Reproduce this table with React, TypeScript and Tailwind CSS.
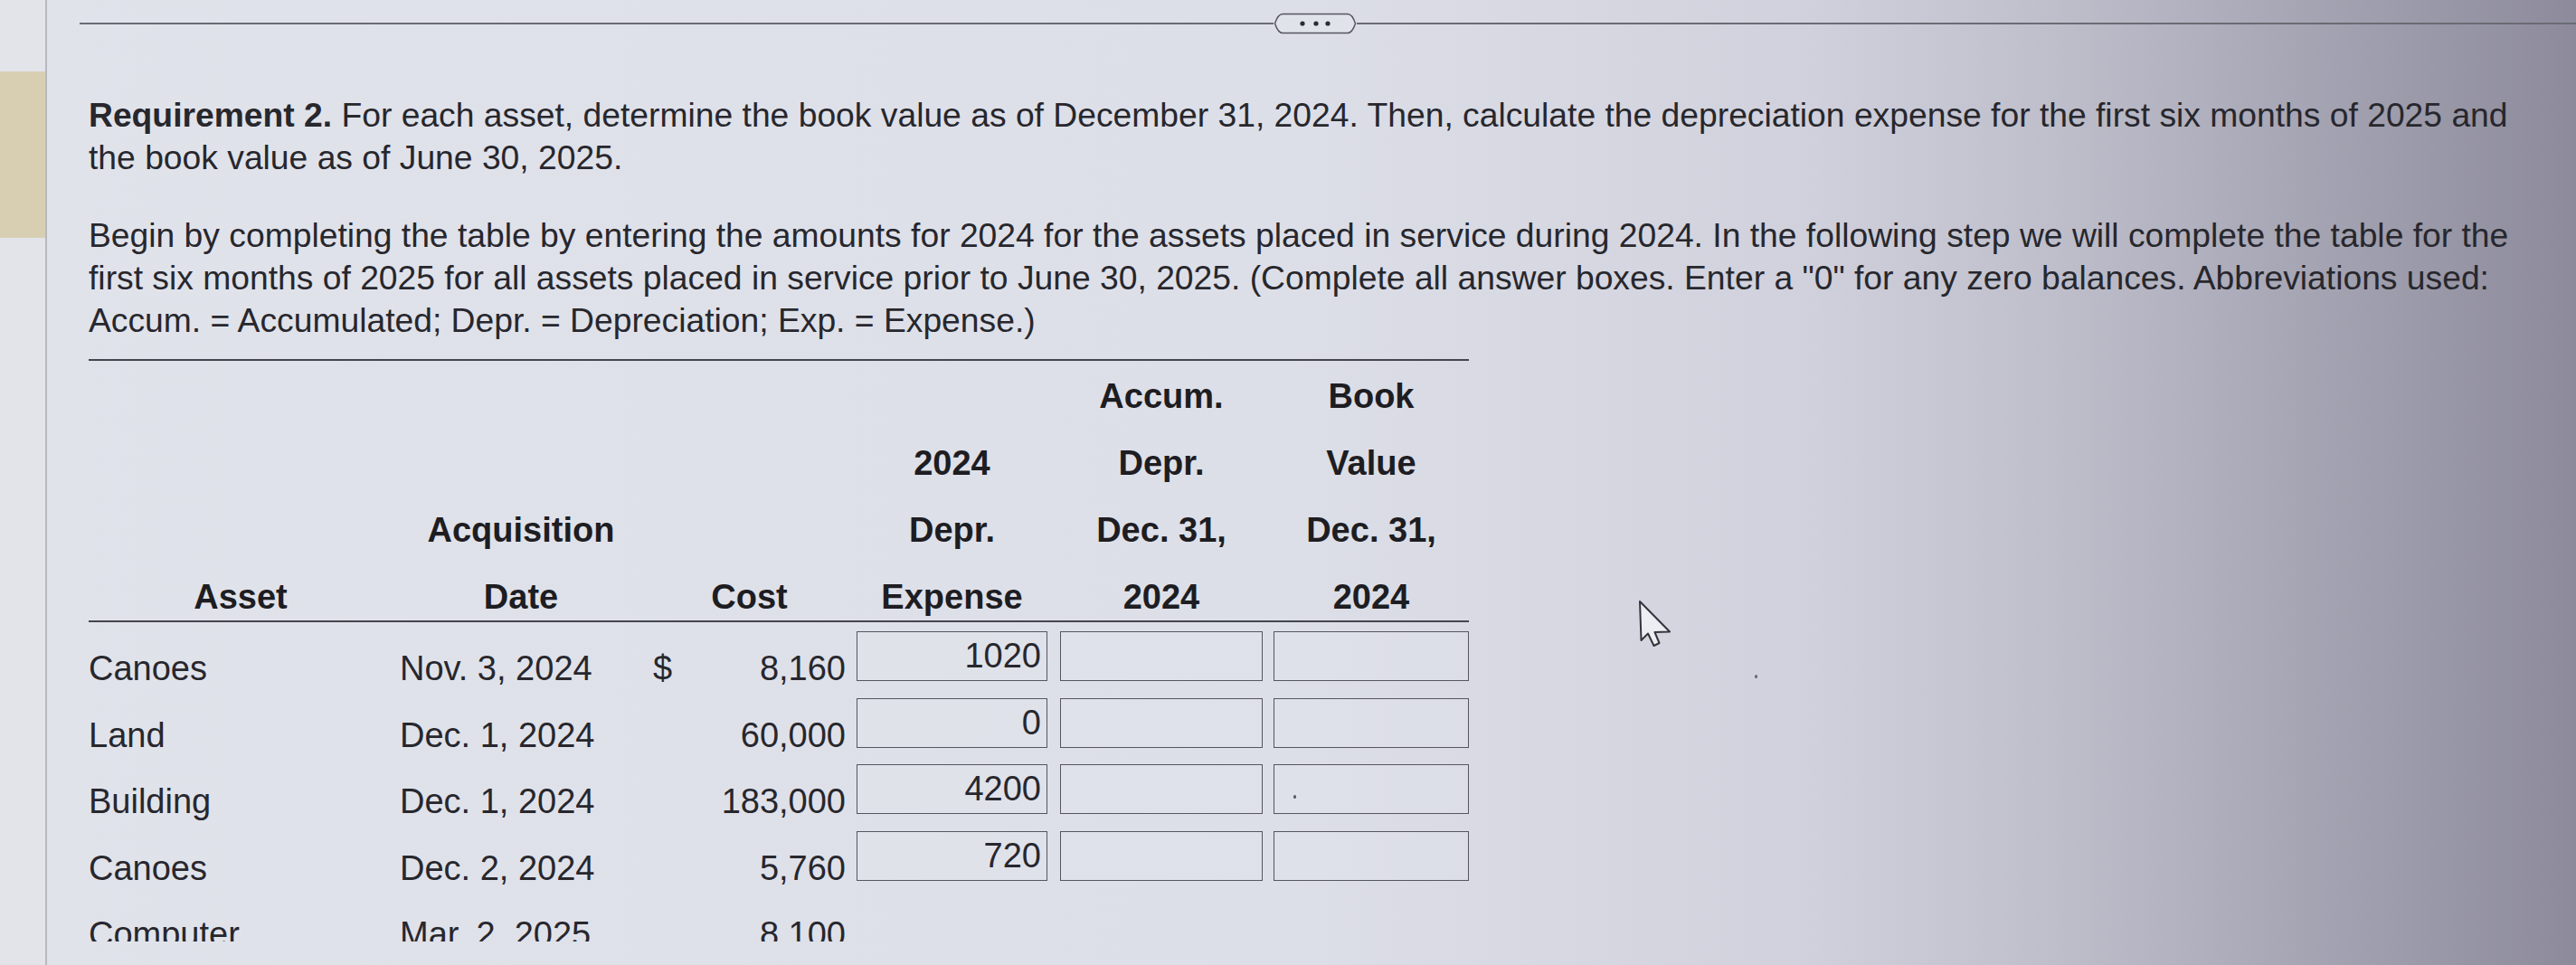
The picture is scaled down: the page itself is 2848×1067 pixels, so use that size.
import React from 'react'

type Row = {
  asset: string
  date: string
  cost: string
  dollar?: boolean
  depr?: string
}

const rows: Row[] = [
  { asset: 'Canoes', date: 'Nov. 3, 2024', cost: '8,160', dollar: true, depr: '1020' },
  { asset: 'Land', date: 'Dec. 1, 2024', cost: '60,000', depr: '0' },
  { asset: 'Building', date: 'Dec. 1, 2024', cost: '183,000', depr: '4200' },
  { asset: 'Canoes', date: 'Dec. 2, 2024', cost: '5,760', depr: '720' },
  { asset: 'Computer', date: 'Mar. 2, 2025', cost: '8,100' },
]

const cols = 'grid grid-cols-[344px_268px_237px_225px_236px_216px]'

function Box({ value, width }: { value?: string; width: string }) {
  return (
    <div
      className={`${width} h-[55px] border-[1.5px] border-[#55565f] bg-[#e6e8ef]/30 pr-[6px] text-right leading-[52px]`}
    >
      {value}
    </div>
  )
}

function Pill() {
  return (
    <svg width="92" height="24" viewBox="0 0 92 24" className="shrink-0">
      <path
        d="M10 1.5 H82 Q87 1.5 90.5 12 Q87 22.5 82 22.5 H10 Q5 22.5 1.5 12 Q5 1.5 10 1.5 Z"
        fill="#e1e3eb"
        stroke="#55565e"
        strokeWidth="1.5"
      />
      <circle cx="32" cy="12" r="2.6" fill="#2c2c33" />
      <circle cx="47" cy="12" r="2.6" fill="#2c2c33" />
      <circle cx="60" cy="12" r="2.6" fill="#2c2c33" />
    </svg>
  )
}

function Cursor() {
  return (
    <svg width="40" height="56" viewBox="0 0 40 56">
      <path
        d="M2 2 L3.5 45 L11 37.5 L17.5 51 L23.5 48 L18.5 36 L35 35.5 Z"
        fill="#eceef4"
        stroke="#34343b"
        strokeWidth="2"
        strokeLinejoin="round"
      />
    </svg>
  )
}

export default function App() {
  return (
    <div className="relative flex h-[1067px] w-[2848px] overflow-hidden bg-[linear-gradient(to_right,#e1e3eb_0%,#dddfe8_50%,#d0d1dc_70%,#bebecb_80%,#a7a6b5_89%,#8d8b9b_100%)] font-['Liberation_Sans',Arial,sans-serif] text-[#27272d]">
      {/* left rail */}
      <div className="w-[52px] shrink-0 border-r-2 border-[#b7b8c1] bg-[#e3e4ea]">
        <div className="mt-[79px] h-[184px] bg-[#d8cfb3]" />
      </div>

      {/* main pane, clipped at the bottom like a scroll area */}
      <div className="h-[1041px] flex-1 overflow-hidden">
        {/* top divider with more button */}
        <div className="ml-[36px] mt-[14px] flex h-[24px] items-center">
          <div className="h-[2px] w-[1320px] bg-[#6a6b74]" />
          <Pill />
          <div className="h-[2px] flex-1 bg-[#6a6b74]" />
        </div>

        <div className="pl-[46px]">
          <div className="text-[37.25px] leading-[47px]">
            <p className="mt-[66px] whitespace-nowrap">
              <b>Requirement 2.</b> For each asset, determine the book value as of December 31, 2024. Then, calculate the depreciation expense for the first six months of 2025 and
              <br />
              the book value as of June 30, 2025.
            </p>

            <p className="mt-[39px] whitespace-nowrap">
              Begin by completing the table by entering the amounts for 2024 for the assets placed in service during 2024. In the following step we will complete the table for the
              <br />
              first six months of 2025 for all assets placed in service prior to June 30, 2025. (Complete all answer boxes. Enter a "0" for any zero balances. Abbreviations used:
              <br />
              Accum. = Accumulated; Depr. = Depreciation; Exp. = Expense.)
            </p>
          </div>

          {/* table */}
          <div className="text-[38px]">
            <div className="mt-[19px] h-[2px] w-[1526px] bg-[#44454d]" />

            <div className={`${cols} pt-[2px] font-bold leading-[74px] text-[#1d1d22]`}>
              <div className="flex flex-col justify-end pr-[8px] text-center">
                <span>Asset</span>
              </div>
              <div className="flex flex-col justify-end text-center">
                <span>Acquisition</span>
                <span>Date</span>
              </div>
              <div className="flex flex-col justify-end text-center">
                <span>Cost</span>
              </div>
              <div className="flex w-[211px] flex-col justify-end text-center">
                <span>2024</span>
                <span>Depr.</span>
                <span>Expense</span>
              </div>
              <div className="flex w-[224px] flex-col justify-end text-center">
                <span>Accum.</span>
                <span>Depr.</span>
                <span>Dec. 31,</span>
                <span>2024</span>
              </div>
              <div className="flex flex-col justify-end text-center">
                <span>Book</span>
                <span>Value</span>
                <span>Dec. 31,</span>
                <span>2024</span>
              </div>
            </div>

            <div className="-mt-[11px] h-[2px] w-[1526px] bg-[#44454d]" />

            <div className="mt-[10px]">
              {rows.map((r, i) => (
                <div key={i} className={`${cols} h-[73.5px] items-start`}>
                  <div className="pt-[20px] leading-[42px]">{r.asset}</div>
                  <div className="pt-[20px] leading-[42px]">{r.date}</div>
                  <div className="flex justify-between pl-[12px] pr-[12px] pt-[20px] leading-[42px]">
                    <span>{r.dollar ? '$' : ''}</span>
                    <span>{r.cost}</span>
                  </div>
                  {r.depr !== undefined ? (
                    <>
                      <Box value={r.depr} width="w-[211px]" />
                      <Box width="w-[224px]" />
                      <div className="relative">
                        <Box width="w-[216px]" />
                        {i === 2 && (
                          <span className="absolute left-[22px] top-[34px] h-[4px] w-[3px] rounded-full bg-[#5a5a62]" />
                        )}
                      </div>
                    </>
                  ) : null}
                </div>
              ))}
            </div>
          </div>
        </div>
      </div>

      {/* mouse pointer and specks over the page */}
      <div className="absolute left-[1811px] top-[663px]">
        <Cursor />
      </div>
      <span className="absolute left-[1940px] top-[746px] h-[4px] w-[3px] rounded-full bg-[#6b6b74]" />
    </div>
  )
}
